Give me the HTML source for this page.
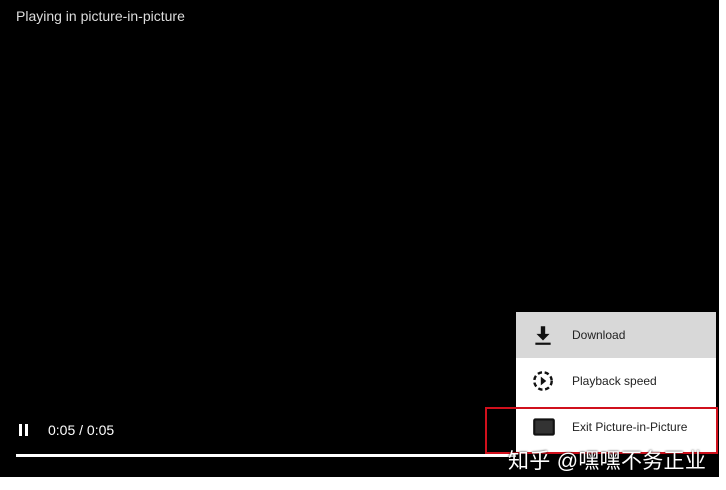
<!DOCTYPE html>
<html><head><meta charset="utf-8"><style>
html,body{margin:0;padding:0;width:726px;height:490px;background:#fff;overflow:hidden;font-family:"Liberation Sans",sans-serif}
.v{position:absolute;left:0;top:0;width:719px;height:477px;background:#000}
.t{position:absolute;left:16px;top:8px;color:#ddd;font-size:14px}
.pause{position:absolute;left:19px;top:424px;width:3px;height:12px;background:#fff;box-shadow:6px 0 0 #fff}
.time{position:absolute;left:48px;top:422px;color:#fff;font-size:14px}
.bar{position:absolute;left:16px;top:454px;width:500px;height:3px;background:#fff}
.menu{position:absolute;left:516px;top:312px;width:200px;height:140px;background:#fff}
.it{position:absolute;left:0;width:200px;height:46px;font-size:12px;color:#222}
.it span{position:absolute;left:56px;top:16px}
.it svg{position:absolute;left:15px;top:11px}
.red{position:absolute;left:485px;top:407px;width:229px;height:43px;border:2px solid #d0101c}
.wm{position:absolute;left:508px;top:445px;color:#fff;font-size:21px;letter-spacing:0.3px;font-family:"Liberation Sans","Noto Sans CJK SC",sans-serif;text-shadow:0 0 2px #000}
</style></head><body>
<div class="v"></div>
<div class="t">Playing in picture-in-picture</div>
<div class="pause"></div>
<div class="time">0:05 / 0:05</div>
<div class="bar"></div>
<div class="menu">
 <div class="it" style="top:0;background:#d8d8d8"><svg width="24" height="24" viewBox="0 0 22 22"><path d="M9 3h4v7h4l-6 6-6-6h4z" fill="#111"/><rect x="4" y="18" width="14" height="2" fill="#111"/></svg><span>Download</span></div>
 <div class="it" style="top:46px"><svg width="24" height="24" viewBox="0 0 22 22"><circle cx="11" cy="11" r="8" fill="none" stroke="#111" stroke-width="2.2" stroke-dasharray="4 2.5"/><path d="M9 7l5 4-5 4z" fill="#111"/></svg><span>Playback speed</span></div>
 <div class="it" style="top:92px"><svg width="26" height="24" viewBox="0 0 24 22"><rect x="2" y="3" width="20" height="16" rx="2" fill="#111"/><rect x="4" y="5" width="16" height="12" fill="#333"/></svg><span>Exit Picture-in-Picture</span></div>
</div>
<div class="red"></div>
<div class="wm">知乎 @嘿嘿不务正业</div>
</body></html>
